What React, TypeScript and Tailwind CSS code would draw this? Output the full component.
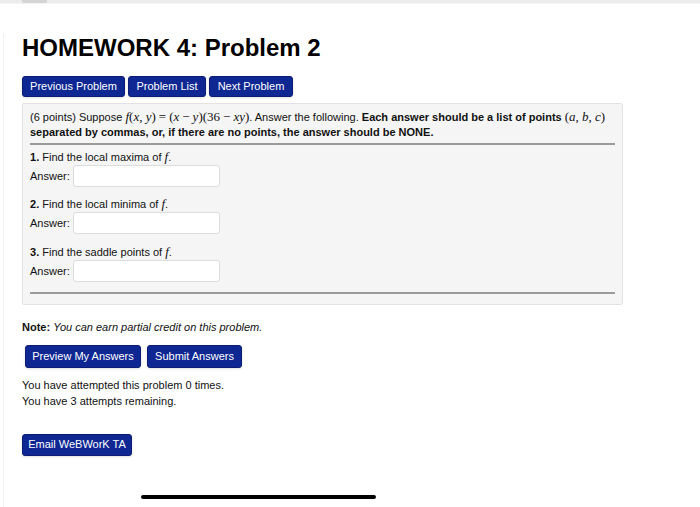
import React from 'react';

const sans = { fontFamily: '"Liberation Sans", Arial, sans-serif' };

const Btn = ({ children, className = '' }: { children: React.ReactNode; className?: string }) => (
  <button
    className={`bg-[#0e2792] border border-[#0a1c74] text-white text-[11px] leading-none whitespace-nowrap rounded-[3px] px-0 shadow-sm ${className}`}
  >
    {children}
  </button>
);

// italic serif for math variables, upright for digits and operators
const M = ({ children }: { children: React.ReactNode }) => (
  <span className="text-[13px] leading-none" style={{ fontFamily: '"Liberation Serif", "Times New Roman", serif' }}>
    {children}
  </span>
);
const I = ({ children }: { children: React.ReactNode }) => <i>{children}</i>;
const Op = ({ children }: { children: React.ReactNode }) => <span className="mx-[3px]">{children}</span>;

const Question = ({ n, text, className = '' }: { n: number; text: string; className?: string }) => (
  <div className={className}>
    <div className="h-[15px] leading-[15px]">
      <b>{n}.</b> {text}{' '}
      <M>
        <I>f</I>
      </M>
      .
    </div>
    <div className="flex items-center h-[22px]">
      <span className="w-[43px]">Answer:</span>
      <input className="w-[147px] h-[22px] bg-white border border-[#dcdcdc] rounded-[3px]" />
    </div>
  </div>
);

export default function App() {
  return (
    <div className="relative w-[700px] h-[507px] bg-white overflow-hidden text-[#111]" style={sans}>
      {/* browser strip across the top */}
      <div className="h-[4px] bg-[#ececec] border-b border-[#f3f3f3]">
        <div className="ml-[22px] w-[25px] h-[3px] bg-[#d4d4d4] rounded-b-[2px]" />
      </div>

      <div className="ml-[3px] border-l border-[#f0f0f0] pl-[18px] h-full">
        <h1 className="mt-[30px] text-[24px] leading-[28px] font-bold text-black">HOMEWORK 4: Problem 2</h1>

        <div className="mt-[14px] flex gap-[3px]">
          <Btn className="h-[21px] w-[103px]">Previous Problem</Btn>
          <Btn className="h-[21px] w-[78px]">Problem List</Btn>
          <Btn className="h-[21px] w-[84px]">Next Problem</Btn>
        </div>

        <div className="mt-[6px] w-[601px] bg-[#f5f5f5] border border-[#e2e2e2] rounded-[2px] px-[7px] pt-[6px] pb-[10px] text-[11px]">
          <div className="leading-[15px]">
            <div className="h-[15px] whitespace-nowrap">
              (6 points) Suppose{' '}
              <M>
                <I>f</I>(<I>x</I>, <I>y</I>)<Op>=</Op>(<I>x</I>
                <Op>−</Op>
                <I>y</I>)(36<Op>−</Op>
                <I>xy</I>)
              </M>
              . Answer the following. <b>Each answer should be a list of points</b>{' '}
              <M>
                (<I>a</I>, <I>b</I>, <I>c</I>)
              </M>
            </div>
            <div className="h-[15px] font-bold whitespace-nowrap">
              separated by commas, or, if there are no points, the answer should be NONE.
            </div>
          </div>
          <div className="mt-[3px] h-[2px] bg-[#9b9b9b]" />

          <Question n={1} text="Find the local maxima of" className="mt-[5px]" />
          <Question n={2} text="Find the local minima of" className="mt-[10px]" />
          <Question n={3} text="Find the saddle points of" className="mt-[11px]" />

          <div className="mt-[10px] h-[2px] bg-[#9b9b9b]" />
        </div>

        <p className="mt-[15px] text-[11px] leading-[15px]">
          <b>Note:</b> <i>You can earn partial credit on this problem.</i>
        </p>

        <div className="mt-[10px] ml-[3px] flex gap-[6px]">
          <Btn className="h-[23px] w-[116px]">Preview My Answers</Btn>
          <Btn className="h-[23px] w-[95px]">Submit Answers</Btn>
        </div>

        <div className="mt-[9px] text-[11px] leading-[16px]">
          <div>You have attempted this problem 0 times.</div>
          <div>You have 3 attempts remaining.</div>
        </div>

        <div className="mt-[22px]">
          <Btn className="h-[22px] w-[110px]">Email WeBWorK TA</Btn>
        </div>
      </div>

      {/* home indicator */}
      <div className="absolute left-[141px] top-[495px] w-[235px] h-[4px] rounded-full bg-black" />
    </div>
  );
}
